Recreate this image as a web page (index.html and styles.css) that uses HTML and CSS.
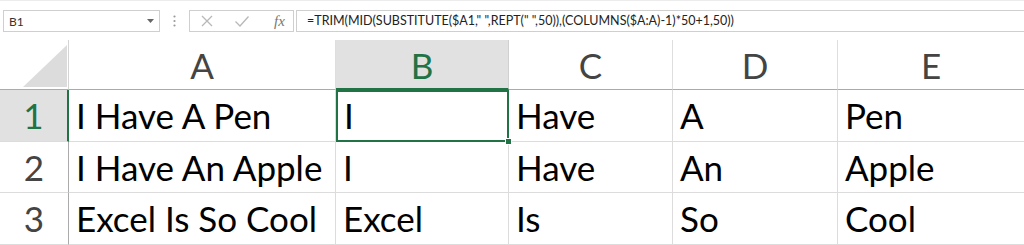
FILE: index.html
```html
<!DOCTYPE html>
<html>
<head>
<meta charset="utf-8">
<link rel="stylesheet" href="styles.css">
</head>
<body>
<div class="app">
  <div class="toolbar">
    <div class="namebox">
      <span class="nb-text">B1</span>
      <svg class="nb-arrow" width="7" height="4" viewBox="0 0 7 4"><path d="M0 0 H7 L3.5 4 Z" fill="#666"/></svg>
    </div>
    <div class="dots">
      <svg width="3" height="12" viewBox="0 0 3 12"><circle cx="1.5" cy="1.5" r="1.1" fill="#9a9a9a"/><circle cx="1.5" cy="6" r="1.1" fill="#9a9a9a"/><circle cx="1.5" cy="10.5" r="1.1" fill="#9a9a9a"/></svg>
    </div>
    <div class="fbuttons">
      <svg class="btn" width="14" height="14" viewBox="0 0 14 14"><path d="M2 2 L12 12 M12 2 L2 12" stroke="#b8b8b8" stroke-width="1.3" fill="none"/></svg>
      <svg class="btn" width="16" height="14" viewBox="0 0 16 14"><path d="M1.5 7.5 L6 12 L14.5 2.5" stroke="#b8b8b8" stroke-width="1.3" fill="none"/></svg>
      <span class="fx">fx</span>
    </div>
    <div class="formula">=TRIM(MID(SUBSTITUTE($A1," ",REPT(" ",50)),(COLUMNS($A:A)-1)*50+1,50))</div>
  </div>
  <div class="sheet">
    <div class="corner"><svg width="44" height="42" viewBox="0 0 44 42"><path d="M44 0 V42 H0 Z" fill="#dcdcdc"/></svg></div>
    <div class="colhead">A</div>
    <div class="colhead sel">B</div>
    <div class="colhead">C</div>
    <div class="colhead">D</div>
    <div class="colhead last">E</div>

    <div class="rowhead sel">1</div>
    <div class="cell">I Have A Pen</div>
    <div class="cell active">I<span class="handle"></span></div>
    <div class="cell">Have</div>
    <div class="cell">A</div>
    <div class="cell last">Pen</div>

    <div class="rowhead">2</div>
    <div class="cell">I Have An Apple</div>
    <div class="cell">I</div>
    <div class="cell">Have</div>
    <div class="cell">An</div>
    <div class="cell last">Apple</div>

    <div class="rowhead">3</div>
    <div class="cell">Excel Is So Cool</div>
    <div class="cell">Excel</div>
    <div class="cell">Is</div>
    <div class="cell">So</div>
    <div class="cell last">Cool</div>
  </div>
</div>
</body>
</html>
```

FILE: styles.css
```css
* { box-sizing: border-box; }
html, body { margin: 0; padding: 0; background: #fff; }
body { width: 1024px; height: 245px; overflow: hidden; font-family: Lato, "Open Sans", sans-serif; }

.app { display: flex; flex-direction: column; }

.toolbar {
  height: 40px;
  display: flex;
  align-items: flex-start;
  padding-top: 9px;
  border-top: 1px solid #ececec;
}

.namebox {
  margin-left: 3px;
  width: 157px;
  height: 22px;
  border: 1px solid #cfcfcf;
  display: flex;
  align-items: center;
  justify-content: space-between;
  padding: 0 5px 0 5px;
}
.nb-text { font-size: 12px; color: #333; }
.nb-arrow { display: block; }

.dots {
  width: 29px;
  height: 22px;
  display: flex;
  align-items: center;
  justify-content: center;
}
.dots svg { display: block; }

.fbuttons {
  width: 105px;
  height: 22px;
  border: 1px solid #cfcfcf;
  display: flex;
  align-items: center;
  padding-left: 10px;
  gap: 20px;
}
.btn { display: block; }
.fx {
  font-family: "Liberation Serif", serif;
  font-style: italic;
  font-size: 15px;
  color: #777;
  margin-left: 4px;
}

.formula {
  margin-left: 2px;
  flex: 1;
  height: 22px;
  border: 1px solid #cfcfcf;
  border-right: none;
  font-size: 12.5px;
  color: #222;
  line-height: 20px;
  padding-left: 10px;
  white-space: nowrap;
}

.sheet {
  display: grid;
  grid-template-columns: 69px 267px 173px 164px 165px 186px;
  grid-template-rows: 50px 52px 51px 52px;
}

.corner {
  border-right: 1px solid #d4d4d4;
  border-bottom: 1px solid #ababab;
  display: flex;
  justify-content: flex-end;
  align-items: flex-end;
  padding: 0 1px 2px 0;
}
.corner svg { display: block; }

.colhead {
  border-right: 1px solid #dedede;
  border-bottom: 1px solid #ababab;
  text-align: center;
  font-size: 35px;
  line-height: 50px;
  color: #444;
}
.colhead.sel {
  background: #e1e1e1;
  color: #217346;
  border-bottom: 2px solid #217346;
  border-right-color: #d0d0d0;
}
.colhead.last { border-right: none; }

.rowhead {
  border-right: 1px solid #ababab;
  border-bottom: 1px solid #dcdcdc;
  text-align: center;
  font-size: 35px;
  line-height: 51px;
  color: #444;
}
.rowhead.sel {
  background: #e1e1e1;
  color: #217346;
  border-right: 2px solid #217346;
}

.cell {
  border-right: 1px solid #dcdcdc;
  border-bottom: 1px solid #dcdcdc;
  font-size: 35px;
  line-height: 51px;
  color: #000;
  padding-left: 7px;
  white-space: nowrap;
}
.cell.last { border-right: none; }

.cell.active {
  position: relative;
  padding-left: 8px;
}
.cell.active::after {
  content: "";
  position: absolute;
  left: 0;
  top: 0;
  right: -1px;
  bottom: -1px;
  border: 2px solid #217346;
}
.handle {
  position: absolute;
  right: -4px;
  bottom: -4px;
  width: 7px;
  height: 7px;
  background: #217346;
  border: 1px solid #fff;
  z-index: 2;
}
```
